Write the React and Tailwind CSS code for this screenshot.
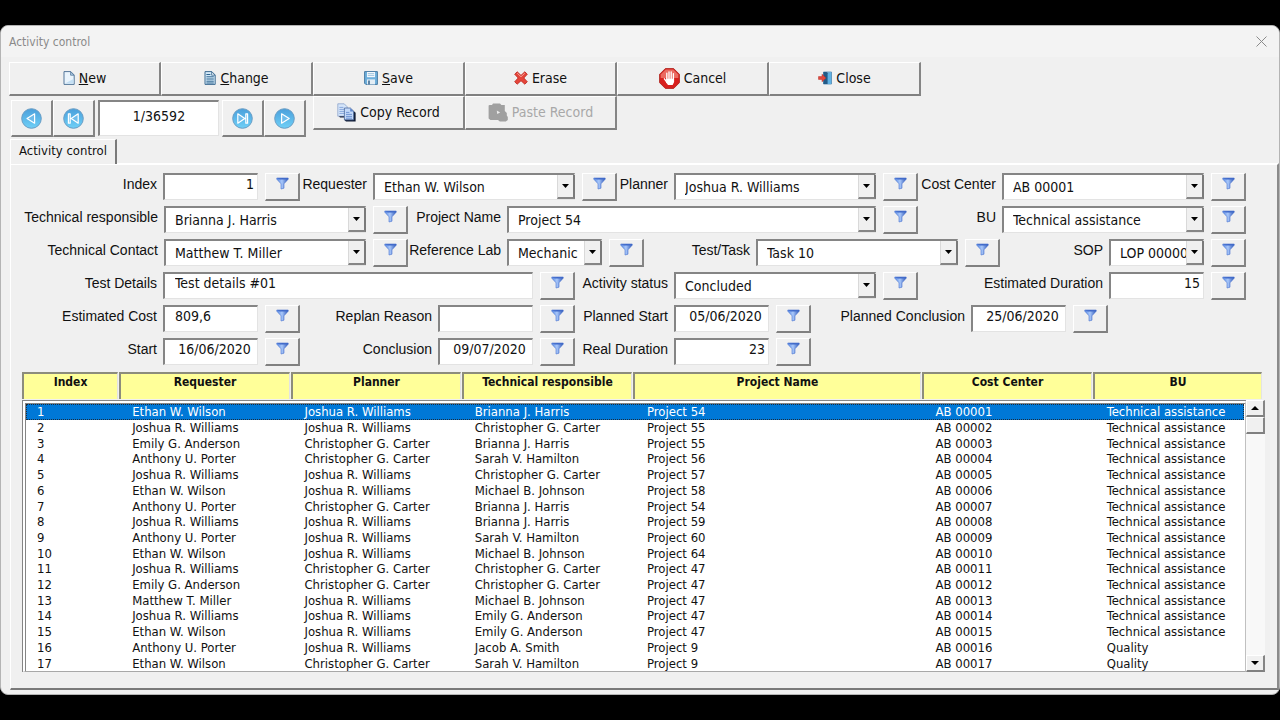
import React, { useState } from 'react';

const RAISED = 'border-t border-l border-r-2 border-b-2 border-t-white border-l-white border-r-[#858585] border-b-[#808080] bg-[#f0f0f0]';
const SUNKEN = 'border-t-2 border-l-2 border-r border-b border-t-[#858585] border-l-[#858585] border-r-[#e3e3e3] border-b-[#e3e3e3] bg-white';

// grow: share of the row; width: box width
const FORM_ROWS = [
  [
    { id: 'index', label: 'Index', value: '1', grow: 287, width: 'w-[95px]', align: 'text-right' },
    { id: 'requester', label: 'Requester', value: 'Ethan W. Wilson', grow: 317, width: 'w-[202px]', select: true },
    { id: 'planner', label: 'Planner', value: 'Joshua R. Williams', grow: 301, width: 'w-[202px]', select: true },
    { id: 'cost-center', label: 'Cost Center', value: 'AB 00001', grow: 328, width: 'w-[202px]', select: true },
  ],
  [
    { id: 'tech-responsible', label: 'Technical responsible', value: 'Brianna J. Harris', grow: 395, width: 'w-[202px]', select: true },
    { id: 'project-name', label: 'Project Name', value: 'Project 54', grow: 510, width: 'w-[369px]', select: true },
    { id: 'bu', label: 'BU', value: 'Technical assistance', grow: 328, width: 'w-[202px]', select: true },
  ],
  [
    { id: 'tech-contact', label: 'Technical Contact', value: 'Matthew T. Miller', grow: 395, width: 'w-[202px]', select: true },
    { id: 'reference-lab', label: 'Reference Lab', value: 'Mechanic', grow: 236, width: 'w-[95px]', select: true },
    { id: 'test-task', label: 'Test/Task', value: 'Task 10', grow: 356, width: 'w-[202px]', select: true },
    { id: 'sop', label: 'SOP', value: 'LOP 00000', grow: 246, width: 'w-[95px]', select: true },
  ],
  [
    { id: 'test-details', label: 'Test Details', value: 'Test details #01', grow: 562, width: 'w-[370px]' },
    { id: 'activity-status', label: 'Activity status', value: 'Concluded', grow: 343, width: 'w-[202px]', select: true },
    { id: 'estimated-duration', label: 'Estimated Duration', value: '15', grow: 328, width: 'w-[95px]', align: 'text-right' },
  ],
  [
    { id: 'estimated-cost', label: 'Estimated Cost', value: '809,6', grow: 287, width: 'w-[95px]' },
    { id: 'replan-reason', label: 'Replan Reason', value: '', grow: 275, width: 'w-[95px]' },
    { id: 'planned-start', label: 'Planned Start', value: '05/06/2020', grow: 236, width: 'w-[95px]', align: 'text-center' },
    { id: 'planned-conclusion', label: 'Planned Conclusion', value: '25/06/2020', grow: 297, width: 'w-[95px]', align: 'text-center' },
  ],
  [
    { id: 'start', label: 'Start', value: '16/06/2020', grow: 287, width: 'w-[95px]', align: 'text-center' },
    { id: 'conclusion', label: 'Conclusion', value: '09/07/2020', grow: 275, width: 'w-[95px]', align: 'text-center' },
    { id: 'real-duration', label: 'Real Duration', value: '23', grow: 236, width: 'w-[95px]', align: 'text-right' },
  ],
];
const ROW_TOTAL = 1233;

const COLUMNS = [
  { title: 'Index', head: 97, body: 95 },
  { title: 'Requester', head: 172, body: 172 },
  { title: 'Planner', head: 171, body: 170 },
  { title: 'Technical responsible', head: 171, body: 172 },
  { title: 'Project Name', head: 289, body: 288 },
  { title: 'Cost Center', head: 171, body: 171 },
  { title: 'BU', head: 170, body: 148 },
];

const RECORDS = [
  ['Ethan W. Wilson', 'Joshua R. Williams', 'Brianna J. Harris', 'Project 54', 'AB 00001', 'Technical assistance'],
  ['Joshua R. Williams', 'Joshua R. Williams', 'Christopher G. Carter', 'Project 55', 'AB 00002', 'Technical assistance'],
  ['Emily G. Anderson', 'Christopher G. Carter', 'Brianna J. Harris', 'Project 55', 'AB 00003', 'Technical assistance'],
  ['Anthony U. Porter', 'Christopher G. Carter', 'Sarah V. Hamilton', 'Project 56', 'AB 00004', 'Technical assistance'],
  ['Joshua R. Williams', 'Joshua R. Williams', 'Christopher G. Carter', 'Project 57', 'AB 00005', 'Technical assistance'],
  ['Ethan W. Wilson', 'Joshua R. Williams', 'Michael B. Johnson', 'Project 58', 'AB 00006', 'Technical assistance'],
  ['Anthony U. Porter', 'Christopher G. Carter', 'Brianna J. Harris', 'Project 54', 'AB 00007', 'Technical assistance'],
  ['Joshua R. Williams', 'Joshua R. Williams', 'Brianna J. Harris', 'Project 59', 'AB 00008', 'Technical assistance'],
  ['Anthony U. Porter', 'Joshua R. Williams', 'Sarah V. Hamilton', 'Project 60', 'AB 00009', 'Technical assistance'],
  ['Ethan W. Wilson', 'Joshua R. Williams', 'Michael B. Johnson', 'Project 64', 'AB 00010', 'Technical assistance'],
  ['Joshua R. Williams', 'Christopher G. Carter', 'Christopher G. Carter', 'Project 47', 'AB 00011', 'Technical assistance'],
  ['Emily G. Anderson', 'Christopher G. Carter', 'Christopher G. Carter', 'Project 47', 'AB 00012', 'Technical assistance'],
  ['Matthew T. Miller', 'Joshua R. Williams', 'Michael B. Johnson', 'Project 47', 'AB 00013', 'Technical assistance'],
  ['Joshua R. Williams', 'Joshua R. Williams', 'Emily G. Anderson', 'Project 47', 'AB 00014', 'Technical assistance'],
  ['Ethan W. Wilson', 'Joshua R. Williams', 'Emily G. Anderson', 'Project 47', 'AB 00015', 'Technical assistance'],
  ['Anthony U. Porter', 'Joshua R. Williams', 'Jacob A. Smith', 'Project 9', 'AB 00016', 'Quality'],
  ['Ethan W. Wilson', 'Christopher G. Carter', 'Sarah V. Hamilton', 'Project 9', 'AB 00017', 'Quality'],
];

function FunnelIcon() {
  return (
    <svg width="13" height="13" viewBox="0 0 13 13" aria-hidden="true">
      <defs>
        <linearGradient id="funnel" x1="0" x2="1" y1="0" y2="0">
          <stop offset="0" stopColor="#5b8be6" />
          <stop offset="0.45" stopColor="#a9c8fa" />
          <stop offset="1" stopColor="#2c55b8" />
        </linearGradient>
      </defs>
      <path d="M0.8 1h11.4v1.2L8 6.8v4.4L5 12V6.8L0.8 2.2z" fill="url(#funnel)" stroke="#4a74d0" strokeWidth="0.6" />
      <ellipse cx="6.5" cy="1.7" rx="5" ry="0.8" fill="#3e68c8" />
    </svg>
  );
}

function NewIcon() {
  return (
    <svg width="12" height="14" viewBox="0 0 12 14" aria-hidden="true">
      <path d="M1 0.6h6.8L11.2 4v9.4H1z" fill="#eaf4fc" stroke="#54779a" />
      <path d="M7.6 0.8v3.4h3.4z" fill="#b5d2ea" stroke="#54779a" strokeWidth="0.8" />
      <path d="M2 12.4h8.4V8z" fill="#c3dff4" />
    </svg>
  );
}

function ChangeIcon() {
  return (
    <svg width="12" height="14" viewBox="0 0 12 14" aria-hidden="true">
      <path d="M1 0.6h6.8L11.2 4v9.4H1z" fill="#d3e9f8" stroke="#3f6c92" />
      <path d="M7.6 0.8v3.4h3.4z" fill="#f5fbff" stroke="#3f6c92" strokeWidth="0.8" />
      <path d="M2.4 3.5h4M2.4 5.8h7.4M2.4 8h7.4M2.4 10.2h7.4M2.4 12h7.4" stroke="#2f648f" />
    </svg>
  );
}

function SaveIcon() {
  return (
    <svg width="14" height="14" viewBox="0 0 14 14" aria-hidden="true">
      <path d="M0.6 0.6h12.8v12.8H1.8L0.6 12.2z" fill="#6fb0dc" stroke="#4a7ba3" />
      <path d="M3 1h8v5.2H3z" fill="#f4f9fd" />
      <path d="M3.8 2.6h6.4M3.8 4.4h6.4" stroke="#8bb7d6" strokeWidth="0.8" />
      <path d="M3 8.4h8v5H3z" fill="#e4eef5" />
      <path d="M4.2 9.4h1.6v4H4.2z" fill="#3d6a92" />
    </svg>
  );
}

function EraseIcon() {
  return (
    <svg width="14" height="14" viewBox="0 0 14 14" aria-hidden="true">
      <path
        d="M3.2 0.8L7 4.4l3.8-3.6 2.5 2.4L9.8 7l3.5 3.8-2.5 2.4L7 9.7l-3.8 3.5-2.5-2.4L4.2 7 0.7 3.2z"
        fill="#e5443a"
        stroke="#c02c24"
        strokeWidth="0.9"
        strokeLinejoin="round"
      />
      <path d="M3.2 2.2L7 5.8l3.8-3.6" stroke="#f79a8f" fill="none" />
    </svg>
  );
}

function StopHandIcon() {
  return (
    <svg width="21" height="21" viewBox="0 0 21 21" aria-hidden="true">
      <path d="M6.3 0.6h8.4l5.7 5.7v8.4l-5.7 5.7H6.3L0.6 14.7V6.3z" fill="#d8201d" stroke="#b5302a" />
      <path d="M6.7 1.6h7.6l5 5V10H1.7V6.6z" fill="#ea6a61" />
      <path d="M7.8 5.2v6M10 3.8v7M12.2 3.8v7M14.4 5.6v6" stroke="#fff" strokeWidth="1.3" strokeLinecap="round" />
      <path d="M7.1 10.4h8v3.6l-1.5 3H9L7.1 14.4z" fill="#fff" />
      <path d="M5.4 10.8l2.6 3.6" stroke="#fff" strokeWidth="1.4" strokeLinecap="round" />
    </svg>
  );
}

function CloseDoorIcon() {
  return (
    <svg width="14" height="14" viewBox="0 0 14 14" aria-hidden="true">
      <path d="M5.5 1h8v12h-8z" fill="#8cc4e8" stroke="#4b86b3" strokeWidth="0.8" />
      <path d="M5.5 1h3l2 1.4V13l-5 0z" fill="#235a86" />
      <path d="M9.6 2.4L13 1.2V13H9.6z" fill="#5fb2e4" />
      <path d="M0.5 5.6H4V3.2L8 7 4 10.8V8.4H0.5z" fill="#e2493e" stroke="#b5302a" strokeWidth="0.5" />
    </svg>
  );
}

function CopyIcon() {
  return (
    <svg width="19" height="19" viewBox="0 0 19 19" aria-hidden="true">
      <path d="M0.8 0.8h6.4l3 3v9.4H0.8z" fill="#d5e5fa" stroke="#8ba3cb" strokeWidth="0.8" />
      <path d="M2.4 4.4h4M2.4 6.4h6M2.4 8.4h6M2.4 10.4h6" stroke="#7397d4" strokeWidth="0.8" />
      <path d="M2 13.2h5.4v1.2H3z" fill="#16223f" />
      <path d="M9 6.2h5.6l4 3.6v8.8H9L7.4 17z" fill="#0f1a33" />
      <path d="M7.4 5h6l3.2 3.2v8.6H7.4z" fill="#c3d9f9" stroke="#4d6b9e" strokeWidth="0.8" />
      <path d="M13.2 5v3.4h3.4z" fill="#5d86cc" />
      <path d="M9 9.4h3.4M9 11.4h6M9 13.4h6M9 15.2h6" stroke="#5a84cc" strokeWidth="0.8" />
    </svg>
  );
}

function PasteIcon() {
  return (
    <svg width="20" height="19" viewBox="0 0 20 19" aria-hidden="true">
      <path d="M0.6 2.4L1.6 2H4l1-1.4h7L13.4 2h3.4v6l2 2v2.6l1 1.4v3l-2 1.4h-6L10 17H2.4L0.6 15.4z" fill="#a0a0a0" />
      <path d="M8.8 7.4l3.4 2-3 1.6z" fill="#ececec" />
    </svg>
  );
}

const NAV_SHAPES = {
  previous: <path d="M13.6 5.8v9.4L6 10.5z" />,
  first: <path d="M15.2 5.8v9.4L8.2 10.5zM5.4 5.8h1.8v9.4H5.4z" />,
  last: <path d="M5.8 5.8v9.4l7-4.7zM13.8 5.8h1.8v9.4h-1.8z" />,
  next: <path d="M7.6 5.8v9.4l7.6-4.7z" />,
};

function NavButton({ kind, label }) {
  return (
    <button type="button" aria-label={label} className={`flex h-[37px] w-[42px] items-center justify-center ${RAISED}`}>
      <svg width="21" height="21" viewBox="0 0 21 21" aria-hidden="true">
        <defs>
          <linearGradient id="nav" x1="0" x2="0" y1="0" y2="1">
            <stop offset="0" stopColor="#4a9fdb" />
            <stop offset="1" stopColor="#6fd0f7" />
          </linearGradient>
        </defs>
        <circle cx="10.5" cy="10.5" r="9.8" fill="url(#nav)" stroke="#6a9dc4" strokeWidth="1" />
        <g fill="#6fbcea" stroke="#fff" strokeWidth="1.2" strokeLinejoin="round">{NAV_SHAPES[kind]}</g>
      </svg>
    </button>
  );
}

function ToolButton({ icon, children, disabled }) {
  return (
    <button
      type="button"
      disabled={disabled}
      className={`flex h-[34px] w-[152px] items-center justify-center gap-1 pb-px text-sm disabled:text-[#a8a8a8] ${RAISED}`}
    >
      {icon}
      <span>{children}</span>
    </button>
  );
}

const INPUT_ALIGN = {
  left: 'pl-[10px]',
  'text-right': 'pl-1 pr-[3px] text-right',
  'text-center': 'pl-[7px] text-center',
};

function Field({ field }) {
  const [value, setValue] = useState(field.value);
  return (
    <div className="flex h-[28px]" style={{ width: `${(field.grow / ROW_TOTAL) * 100}%` }}>
      <label htmlFor={field.id} className="flex-1 whitespace-nowrap pr-[6px] pt-px text-right font-['Liberation_Sans',sans-serif] text-sm">
        {field.label}
      </label>
      {field.select ? (
        <div className={`relative h-[27px] shrink-0 ${field.width}`}>
          <select
            id={field.id}
            value={value}
            onChange={(e) => setValue(e.target.value)}
            className={`h-full w-full appearance-none overflow-hidden pb-px pl-[9px] pr-[15px] text-sm ${SUNKEN}`}
          >
            <option>{field.value}</option>
          </select>
          <span className="pointer-events-none absolute bottom-px right-0 top-[2px] flex w-[18px] items-center justify-center border-b-2 border-l border-r-2 border-b-[#858585] border-l-[#d9d9d9] border-r-[#7a7a7a] bg-[#f0f0f0]">
            <svg width="7" height="4" viewBox="0 0 7 4" aria-hidden="true">
              <path d="M0 0h7L3.5 4z" fill="#000" />
            </svg>
          </span>
        </div>
      ) : (
        <input
          id={field.id}
          type="text"
          value={value}
          onChange={(e) => setValue(e.target.value)}
          className={`h-[27px] shrink-0 pb-[6px] text-sm ${INPUT_ALIGN[field.align || 'left']} ${field.width} ${SUNKEN}`}
        />
      )}
      <button
        type="button"
        aria-label={`Filter by ${field.label}`}
        className={`ml-[7px] flex h-[28px] w-[35px] shrink-0 justify-center pt-[3px] ${RAISED}`}
      >
        <FunnelIcon />
      </button>
    </div>
  );
}

function ColumnWidths({ part }) {
  const total = COLUMNS.reduce((sum, c) => sum + c[part], 0);
  return (
    <colgroup>
      {COLUMNS.map((c) => (
        <col key={c.title} style={{ width: `${(c[part] / total) * 100}%` }} />
      ))}
    </colgroup>
  );
}

function RecordList() {
  const [selected, setSelected] = useState(0);
  return (
    <div className="pl-[9px] pr-[12px]">
      <table className="w-[calc(100%-2px)] table-fixed border-separate border-spacing-0">
        <ColumnWidths part="head" />
        <thead>
          <tr>
            {COLUMNS.map((c) => (
              <th key={c.title} className="h-[28px] p-0 pr-px align-top">
                <div className="h-[27px] overflow-hidden whitespace-nowrap border-l-2 border-r border-t-2 border-l-[#8c8c7c] border-r-[#e3e3e3] border-t-[#8c8c7c] bg-[#ffff99] text-xs leading-[17px]">
                  {c.title}
                </div>
              </th>
            ))}
          </tr>
        </thead>
      </table>
      <div className="flex">
        <div className="flex-1 border-b border-l-4 border-r border-t-4 border-b-[#a8a8a8] border-l-[#858585] border-r-[#c0c0c0] border-t-[#858585] bg-white pr-px [border-left-style:double] [border-top-style:double]">
          <table aria-label="Activities" className="h-[267px] w-full table-fixed border-collapse text-[13px] leading-[15px]">
            <ColumnWidths part="body" />
            <tbody>
              {RECORDS.map((record, i) => (
                <tr
                  key={record[4]}
                  onClick={() => setSelected(i)}
                  className={i === selected ? 'bg-[#0078d7] text-white outline-1 -outline-offset-1 outline-dotted outline-[#1c2b3a]' : ''}
                >
                  {[i + 1, ...record].map((cell, j) => (
                    <td key={j} className="whitespace-nowrap p-0 pl-[11px]">{cell}</td>
                  ))}
                </tr>
              ))}
            </tbody>
          </table>
        </div>
        <div className="flex w-[19px] flex-col bg-[#f8f8f8]">
          <button type="button" aria-label="Scroll up" className={`flex h-[17px] items-center justify-center ${RAISED}`}>
            <svg width="8" height="4" viewBox="0 0 8 4" aria-hidden="true">
              <path d="M0 4h8L4 0z" />
            </svg>
          </button>
          <div className={`h-[17px] ${RAISED}`} />
          <div className="flex-1" />
          <button type="button" aria-label="Scroll down" className={`flex h-[17px] items-center justify-center ${RAISED}`}>
            <svg width="8" height="4" viewBox="0 0 8 4" aria-hidden="true">
              <path d="M0 0h8L4 4z" />
            </svg>
          </button>
        </div>
      </div>
    </div>
  );
}

export default function App() {
  const [position, setPosition] = useState('1/36592');

  return (
    <div className="min-h-screen bg-black py-[25px] font-['DejaVu_Sans_Condensed','Noto_Sans',sans-serif] text-[#111]">
      <main className="rounded-lg border border-[#b4b4b4] bg-[#f0f0f0] pb-1">

        {/* Title bar */}
        <header className="flex h-[31px] items-center justify-between rounded-t-lg bg-[#f3f3f3] pl-2 pr-3">
          <h1 className="text-xs text-[#8a8a8a]">Activity control</h1>
          <button type="button" aria-label="Close window">
            <svg width="11" height="11" viewBox="0 0 11 11" aria-hidden="true">
              <path d="M0.5 0.5l10 10M10.5 0.5l-10 10" stroke="#8a8a8a" />
            </svg>
          </button>
        </header>

        {/* Toolbar */}
        <div className="flex px-2 pt-[5px]">
          <ToolButton icon={<NewIcon />}><u>N</u>ew</ToolButton>
          <ToolButton icon={<ChangeIcon />}><u>C</u>hange</ToolButton>
          <ToolButton icon={<SaveIcon />}><u>S</u>ave</ToolButton>
          <ToolButton icon={<EraseIcon />}>Erase</ToolButton>
          <ToolButton icon={<StopHandIcon />}>Cancel</ToolButton>
          <ToolButton icon={<CloseDoorIcon />}>Close</ToolButton>
        </div>
        <div className="flex px-2">
          <div className="flex w-[304px] items-start pl-[2px] pt-1">
            <NavButton kind="previous" label="Previous record" />
            <NavButton kind="first" label="First record" />
            <input
              type="text"
              aria-label="Record position"
              value={position}
              onChange={(e) => setPosition(e.target.value)}
              className={`mx-[3px] h-[36px] w-[121px] pb-[6px] text-center text-sm ${SUNKEN}`}
            />
            <NavButton kind="last" label="Last record" />
            <NavButton kind="next" label="Next record" />
          </div>
          <ToolButton icon={<CopyIcon />}>Copy Record</ToolButton>
          <ToolButton icon={<PasteIcon />} disabled>Paste Record</ToolButton>
        </div>

        {/* Tab */}
        <div className="flex pl-[9px] pt-[2px]" role="tablist">
          <button
            type="button"
            role="tab"
            aria-selected="true"
            className="relative -mb-px h-[25px] border-l border-r-2 border-t border-l-white border-r-[#7a7a7a] border-t-white bg-[#f0f0f0] px-[8px] pb-[2px] text-[13px]"
          >
            Activity control
          </button>
        </div>

        <section className="ml-[9px] border-b-2 border-l border-r-2 border-t-2 border-b-[#7a7a7a] border-l-white border-r-[#8a8a8a] border-t-white pb-4 pl-[2px] pt-2">
          <form className="flex flex-col gap-[5px] pr-[31px]">
            {FORM_ROWS.map((row) => (
              <div key={row[0].id} className="flex">
                {row.map((field) => <Field key={field.id} field={field} />)}
              </div>
            ))}
          </form>
          <div className="pt-[6px]">
            <RecordList />
          </div>
        </section>
      </main>
    </div>
  );
}
